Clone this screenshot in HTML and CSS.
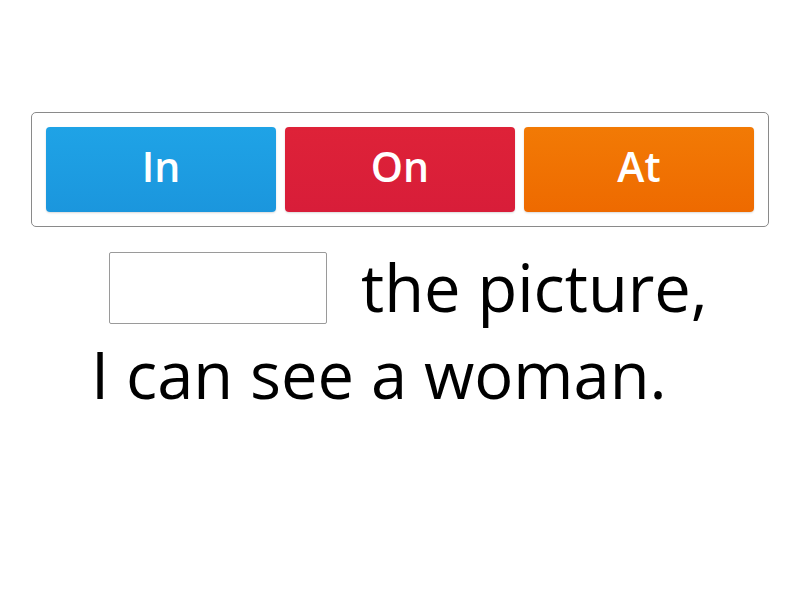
FILE: index.html
```html
<!DOCTYPE html>
<html>
<head>
<meta charset="utf-8">
<link rel="stylesheet" href="styles.css">
</head>
<body>
<div class="page">
  <div class="options">
    <div class="opt opt-blue">In</div>
    <div class="opt opt-red">On</div>
    <div class="opt opt-orange">At</div>
  </div>
  <div class="sentence">
    <div class="line line-1"><span class="blank"></span><span class="words">the picture,</span></div>
    <div class="line line-2">I can see a woman.</div>
  </div>
</div>
</body>
</html>
```
FILE: styles.css
```css
html, body {
  margin: 0;
  padding: 0;
  background: #ffffff;
}
body {
  width: 800px;
  height: 600px;
  overflow: hidden;
  font-family: "Open Sans", "Noto Sans", sans-serif;
}
.page {
  padding-top: 112px;
}
.options {
  margin-left: 31px;
  width: 738px;
  height: 115px;
  box-sizing: border-box;
  border: 1px solid #8a8a8a;
  border-radius: 5px;
  padding: 14px;
  display: flex;
  gap: 9px;
}
.opt {
  width: 230px;
  height: 85px;
  box-sizing: border-box;
  padding-bottom: 8px;
  border-radius: 4px;
  color: #ffffff;
  font-weight: 600;
  font-size: 41px;
  display: flex;
  align-items: center;
  justify-content: center;
  box-shadow: 0 1px 2px rgba(0,0,0,0.15);
}
.opt-blue {
  background: linear-gradient(#1fa3e6, #1b96dd);
}
.opt-red {
  background: linear-gradient(#de2238, #d81d39);
}
.opt-orange {
  background: linear-gradient(#f27a05, #ee6a00);
}
.sentence {
  color: #000000;
  font-size: 65px;
  line-height: 87px;
}
.line {
  display: flex;
  align-items: center;
  white-space: nowrap;
}
.line-1 {
  margin-top: 17px;
  padding-left: 109px;
}
.blank {
  width: 218px;
  height: 72px;
  box-sizing: border-box;
  border: 1px solid #9a9a9a;
  border-radius: 2px;
  margin-right: 34px;
}
.line-2 {
  padding-left: 91px;
}
```
